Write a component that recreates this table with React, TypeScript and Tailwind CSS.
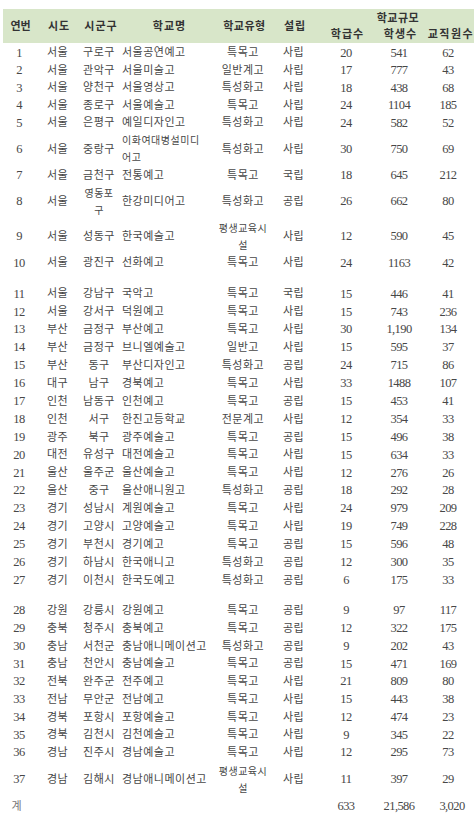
import type { ReactNode } from "react";

// 예술계 고등학교 현황 표

type School = {
  no: string;
  sido: string;
  sigungu: ReactNode;
  name: ReactNode;
  type: ReactNode;
  est: string;
  classes: string;
  students: string;
  staff: string;
  tall?: boolean;
};

const COLS = "grid grid-cols-[38px_39px_44px_94px_56px_45px_60px_46px_52px]";
const NUM = "text-center text-[12.5px] tracking-[-0.6px]";

const two = (a: string, b: string) => (
  <span className="block text-[10px] leading-[17px]">
    {a}
    <br />
    {b}
  </span>
);

const groupA: School[] = [
  { no: "1", sido: "서울", sigungu: "구로구", name: "서울공연예고", type: "특목고", est: "사립", classes: "20", students: "541", staff: "62" },
  { no: "2", sido: "서울", sigungu: "관악구", name: "서울미술고", type: "일반계고", est: "사립", classes: "17", students: "777", staff: "43" },
  { no: "3", sido: "서울", sigungu: "양천구", name: "서울영상고", type: "특성화고", est: "사립", classes: "18", students: "438", staff: "68" },
  { no: "4", sido: "서울", sigungu: "종로구", name: "서울예술고", type: "특목고", est: "사립", classes: "24", students: "1104", staff: "185" },
  { no: "5", sido: "서울", sigungu: "은평구", name: "예일디자인고", type: "특성화고", est: "사립", classes: "24", students: "582", staff: "52" },
  { no: "6", sido: "서울", sigungu: "중랑구", name: two("이화여대병설미디", "어고"), type: "특성화고", est: "사립", classes: "30", students: "750", staff: "69", tall: true },
  { no: "7", sido: "서울", sigungu: "금천구", name: "전통예고", type: "특목고", est: "국립", classes: "18", students: "645", staff: "212" },
  { no: "8", sido: "서울", sigungu: two("영동포", "구"), name: "한강미디어고", type: "특성화고", est: "공립", classes: "26", students: "662", staff: "80", tall: true },
  { no: "9", sido: "서울", sigungu: "성동구", name: "한국예술고", type: two("평생교육시", "설"), est: "사립", classes: "12", students: "590", staff: "45", tall: true },
  { no: "10", sido: "서울", sigungu: "광진구", name: "선화예고", type: "특목고", est: "사립", classes: "24", students: "1163", staff: "42" },
];

const groupB: School[] = [
  { no: "11", sido: "서울", sigungu: "강남구", name: "국악고", type: "특목고", est: "국립", classes: "15", students: "446", staff: "41" },
  { no: "12", sido: "서울", sigungu: "강서구", name: "덕원예고", type: "특목고", est: "사립", classes: "15", students: "743", staff: "236" },
  { no: "13", sido: "부산", sigungu: "금정구", name: "부산예고", type: "특목고", est: "사립", classes: "30", students: "1,190", staff: "134" },
  { no: "14", sido: "부산", sigungu: "금정구", name: "브니엘예술고", type: "일반고", est: "사립", classes: "15", students: "595", staff: "37" },
  { no: "15", sido: "부산", sigungu: "동구", name: "부산디자인고", type: "특성화고", est: "공립", classes: "24", students: "715", staff: "86" },
  { no: "16", sido: "대구", sigungu: "남구", name: "경북예고", type: "특목고", est: "사립", classes: "33", students: "1488", staff: "107" },
  { no: "17", sido: "인천", sigungu: "남동구", name: "인천예고", type: "특목고", est: "공립", classes: "15", students: "453", staff: "41" },
  { no: "18", sido: "인천", sigungu: "서구", name: "한진고등학교", type: "전문계고", est: "사립", classes: "12", students: "354", staff: "33" },
  { no: "19", sido: "광주", sigungu: "북구", name: "광주예술고", type: "특목고", est: "공립", classes: "15", students: "496", staff: "38" },
  { no: "20", sido: "대전", sigungu: "유성구", name: "대전예술고", type: "특목고", est: "사립", classes: "15", students: "634", staff: "33" },
  { no: "21", sido: "울산", sigungu: "울주군", name: "울산예술고", type: "특목고", est: "사립", classes: "12", students: "276", staff: "26" },
  { no: "22", sido: "울산", sigungu: "중구", name: "울산애니원고", type: "특성화고", est: "공립", classes: "18", students: "292", staff: "28" },
  { no: "23", sido: "경기", sigungu: "성남시", name: "계원예술고", type: "특목고", est: "사립", classes: "24", students: "979", staff: "209" },
  { no: "24", sido: "경기", sigungu: "고양시", name: "고양예술고", type: "특목고", est: "사립", classes: "19", students: "749", staff: "228" },
  { no: "25", sido: "경기", sigungu: "부천시", name: "경기예고", type: "특목고", est: "공립", classes: "15", students: "596", staff: "48" },
  { no: "26", sido: "경기", sigungu: "하남시", name: "한국애니고", type: "특성화고", est: "공립", classes: "12", students: "300", staff: "35" },
  { no: "27", sido: "경기", sigungu: "이천시", name: "한국도예고", type: "특성화고", est: "공립", classes: "6", students: "175", staff: "33" },
];

const groupC: School[] = [
  { no: "28", sido: "강원", sigungu: "강릉시", name: "강원예고", type: "특목고", est: "공립", classes: "9", students: "97", staff: "117" },
  { no: "29", sido: "충북", sigungu: "청주시", name: "충북예고", type: "특목고", est: "공립", classes: "12", students: "322", staff: "175" },
  { no: "30", sido: "충남", sigungu: "서천군", name: "충남애니메이션고", type: "특성화고", est: "공립", classes: "9", students: "202", staff: "43" },
  { no: "31", sido: "충남", sigungu: "천안시", name: "충남예술고", type: "특목고", est: "공립", classes: "15", students: "471", staff: "169" },
  { no: "32", sido: "전북", sigungu: "완주군", name: "전주예고", type: "특목고", est: "사립", classes: "21", students: "809", staff: "80" },
  { no: "33", sido: "전남", sigungu: "무안군", name: "전남예고", type: "특목고", est: "사립", classes: "15", students: "443", staff: "38" },
  { no: "34", sido: "경북", sigungu: "포항시", name: "포항예술고", type: "특목고", est: "사립", classes: "12", students: "474", staff: "23" },
  { no: "35", sido: "경북", sigungu: "김천시", name: "김천예술고", type: "특목고", est: "사립", classes: "9", students: "345", staff: "22" },
  { no: "36", sido: "경남", sigungu: "진주시", name: "경남예술고", type: "특목고", est: "사립", classes: "12", students: "295", staff: "73" },
  { no: "37", sido: "경남", sigungu: "김해시", name: "경남애니메이션고", type: two("평생교육시", "설"), est: "사립", classes: "11", students: "397", staff: "29", tall: true },
];

function Row({ s, h }: { s: School; h: string }) {
  return (
    <div className={`${COLS} items-center ${h}`}>
      <div className={NUM}>{s.no}</div>
      <div className="text-center tracking-[0.5px]">{s.sido}</div>
      <div className="text-center tracking-[0.5px]">{s.sigungu}</div>
      <div className="pl-[1px] tracking-[0.5px] whitespace-nowrap">{s.name}</div>
      <div className="text-center tracking-[0.5px] whitespace-nowrap">{s.type}</div>
      <div className="text-center tracking-[0.5px]">{s.est}</div>
      <div className={NUM}>{s.classes}</div>
      <div className={NUM}>{s.students}</div>
      <div className={NUM}>{s.staff}</div>
    </div>
  );
}

export default function App() {
  return (
    <div className="w-[474px] h-[831px] bg-white text-[#474747] text-[11px] leading-none font-['Liberation_Serif','Noto_Sans_CJK_KR',serif] overflow-hidden">
      {/* 머리글 */}
      <div className={`${COLS} grid-rows-[17px_17px] mt-[9px] ml-[3px] w-[471px] bg-[#d8e6c9] font-bold text-[#333] text-[11px]`}>
        <div className="row-span-2 flex items-center justify-center pr-[3px]">연번</div>
        <div className="row-span-2 flex items-center justify-center pr-[3px] tracking-[1px]">시도</div>
        <div className="row-span-2 flex items-center justify-center pr-[2px] tracking-[1px]">시군구</div>
        <div className="row-span-2 flex items-center justify-center pr-[3px] tracking-[1px]">학교명</div>
        <div className="row-span-2 flex items-center justify-center pr-[3px] tracking-[0.5px]">학교유형</div>
        <div className="row-span-2 flex items-center justify-center pr-[3px] tracking-[1px]">설립</div>
        <div className="col-span-3 flex items-center justify-center pt-[1px] tracking-[0.5px]">학교규모</div>
        <div className="flex items-center justify-center pr-[3px] tracking-[1px]">학급수</div>
        <div className="flex items-center justify-center pr-[3px] tracking-[1px]">학생수</div>
        <div className="flex items-center justify-center tracking-[1.5px]">교직원수</div>
      </div>

      <div className="mt-[1px]">
        {groupA.map((s) => (
          <Row key={s.no} s={s} h={s.tall ? "h-[35px]" : "h-[17.5px]"} />
        ))}
      </div>

      <div className="mt-[13.5px]">
        {groupB.map((s) => (
          <Row key={s.no} s={s} h="h-[17.9px]" />
        ))}
      </div>

      <div className="mt-[12.7px]">
        {groupC.map((s) => (
          <Row key={s.no} s={s} h={s.tall ? "h-[36px]" : "h-[17.75px]"} />
        ))}
        <div className={`${COLS} items-center h-[18px]`}>
          <div className="text-center pr-[5px] text-[#777]">계</div>
          <div />
          <div />
          <div />
          <div />
          <div />
          <div className={NUM}>633</div>
          <div className={NUM}>21,586</div>
          <div className={`${NUM} pl-[8px]`}>3,020</div>
        </div>
      </div>
    </div>
  );
}
